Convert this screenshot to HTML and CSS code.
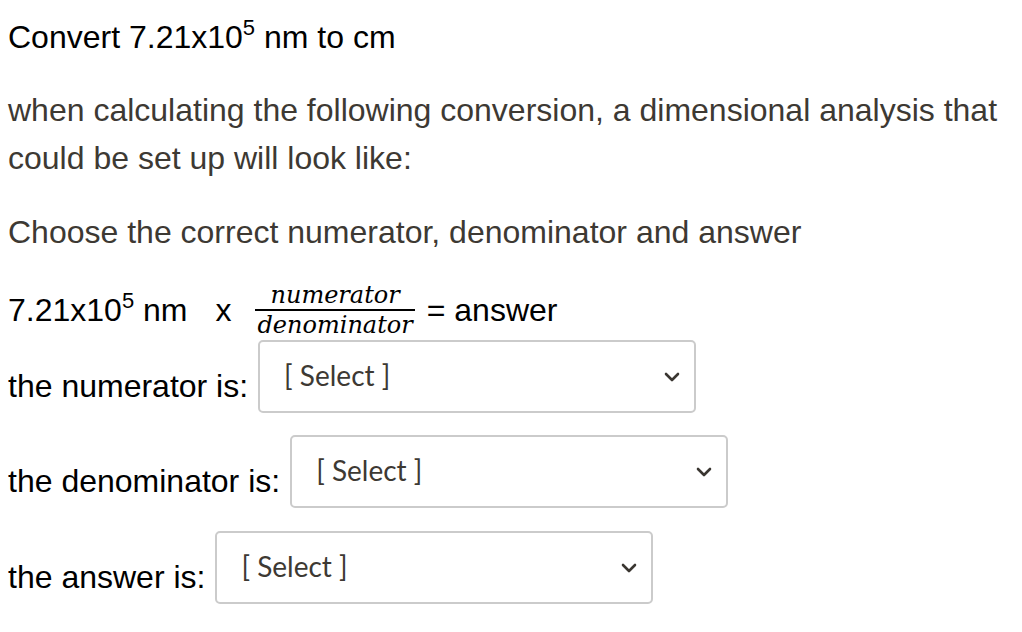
FILE: index.html
```html
<!DOCTYPE html>
<html>
<head>
<meta charset="utf-8">
<link rel="stylesheet" href="styles.css">
</head>
<body>
<div class="page">
  <p class="title">Convert 7.21x10<sup>5</sup> nm to cm</p>
  <p class="para">when calculating the following conversion, a dimensional analysis that could be set up will look like:</p>
  <p class="para choose">Choose the correct numerator, denominator and answer</p>
  <div class="equation">
    <span class="lhs">7.21x10<sup>5</sup> nm</span>
    <span class="times">x</span>
    <span class="frac">
      <span class="num">numerator</span>
      <span class="den">denominator</span>
    </span>
    <span class="rhs">= answer</span>
  </div>
  <div class="row">
    <span class="label">the numerator is:</span>
    <div class="select"><span class="sel-text">[ Select ]</span><svg class="chev" viewBox="0 0 16 10" width="16" height="10"><path d="M2 2 L8 8 L14 2" fill="none" stroke="#3a3631" stroke-width="2.6" stroke-linecap="round" stroke-linejoin="round"/></svg></div>
  </div>
  <div class="row">
    <span class="label">the denominator is:</span>
    <div class="select"><span class="sel-text">[ Select ]</span><svg class="chev" viewBox="0 0 16 10" width="16" height="10"><path d="M2 2 L8 8 L14 2" fill="none" stroke="#3a3631" stroke-width="2.6" stroke-linecap="round" stroke-linejoin="round"/></svg></div>
  </div>
  <div class="row">
    <span class="label">the answer is:</span>
    <div class="select"><span class="sel-text">[ Select ]</span><svg class="chev" viewBox="0 0 16 10" width="16" height="10"><path d="M2 2 L8 8 L14 2" fill="none" stroke="#3a3631" stroke-width="2.6" stroke-linecap="round" stroke-linejoin="round"/></svg></div>
  </div>
</div>
</body>
</html>
```
FILE: styles.css
```css
html, body {
  margin: 0;
  padding: 0;
  background: #ffffff;
}
body {
  font-family: "Liberation Sans", Arial, sans-serif;
  font-size: 32px;
  color: #000;
}
.page {
  padding: 0 8px;
}
p {
  margin: 0;
}
sup {
  font-size: 22px;
  vertical-align: 0;
  position: relative;
  top: -13px;
}
.title {
  line-height: 48px;
  padding-top: 13px;
}
.para {
  color: #3d3933;
  line-height: 48px;
  margin-top: 21px;
}
.choose {
  margin-top: 26px;
}
.equation {
  display: flex;
  align-items: center;
  margin-top: 26px;
  height: 56px;
}
.times {
  margin-left: 28px;
  margin-right: 24px;
}
.frac {
  display: inline-flex;
  flex-direction: column;
  align-items: center;
  font-family: "DejaVu Serif", "Liberation Serif", serif;
  font-style: italic;
  font-size: 24px;
  margin-right: 12px;
}
.num {
  line-height: 28px;
  border-bottom: 2px solid #000;
  padding: 0 10px;
  width: 100%;
  text-align: center;
  box-sizing: border-box;
}
.den {
  line-height: 28px;
  padding: 0 2px;
}
.row {
  display: flex;
  align-items: flex-start;
  margin-top: 22px;
}
.equation + .row {
  margin-top: 2px;
}
.row:last-child {
  margin-top: 23px;
}
.label {
  padding-top: 28px;
  line-height: 36px;
  margin-right: 10px;
}
.select {
  width: 438px;
  height: 73px;
  box-sizing: border-box;
  border: 2px solid #cbcbcb;
  border-radius: 5px;
  display: flex;
  align-items: center;
  justify-content: space-between;
  padding: 0 14px 0 24px;
  font-family: Lato, "Open Sans", sans-serif;
  font-size: 28px;
  color: #3d3933;
}
.sel-text {
  position: relative;
  top: -2px;
}
.chev {
  flex: none;
}
```
